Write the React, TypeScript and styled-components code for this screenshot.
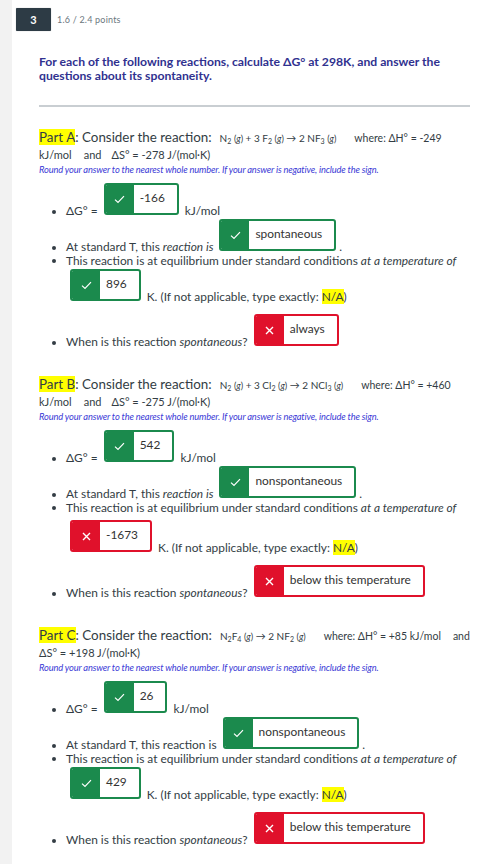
import React from "react";
import styled, { createGlobalStyle } from "styled-components";

const GlobalStyle = createGlobalStyle`
  html, body {
    margin: 0;
    padding: 0;
    background: #ffffff;
  }
  body {
    font-family: Lato, "Open Sans", "DejaVu Sans", sans-serif;
    color: #333d44;
  }
`;

const Page = styled.div`
  min-height: 864px;
  border-left: 12px solid #f2f2f2;
  box-sizing: border-box;
  padding-bottom: 20px;
`;

const Header = styled.div`
  display: flex;
  align-items: center;
  gap: 6px;
  padding: 8px 0 0 4px;
`;

const Badge = styled.div`
  width: 35px;
  height: 23px;
  display: flex;
  align-items: center;
  justify-content: center;
  background: #2d3b45;
  color: #ffffff;
  font-size: 11px;
  font-weight: 700;
  border-radius: 1px;
  box-shadow: 0 0 1px rgba(0, 0, 0, 0.4);
`;

const Points = styled.span`
  font-size: 9px;
  color: #6b7780;
  letter-spacing: 0.2px;
`;

const Content = styled.div`
  padding: 0 14px 0 27px;
`;

const Intro = styled.p`
  margin: 24px 0 0;
  color: #30318f;
  font-size: 12.2px;
  font-weight: 700;
  line-height: 14px;
`;

const Rule = styled.hr`
  margin: 22px 0 0;
  border: none;
  border-top: 2px solid #c9ced2;
`;

const Part = styled.section<{ $first?: boolean }>`
  margin-top: ${({ $first }) => ($first ? "22px" : "27px")};
`;

const TitleLine = styled.div`
  font-size: 11px;
  line-height: 16px;
  white-space: nowrap;

  sub {
    font-size: 70%;
    line-height: 0;
    vertical-align: -0.3em;
  }
`;

const Lead = styled.span`
  font-size: 13.4px;
`;

const Label = styled.span`
  background: #ffff00;
`;

const Equation = styled.span`
  font-size: 10px;
`;

const Tail = styled.span`
  font-size: 10.5px;
`;

const Gas = styled.span`
  font-size: 9px;
`;

const Gap = styled.span<{ $w: number }>`
  display: inline-block;
  width: ${({ $w }) => $w}px;
`;

const Note = styled.div`
  font-size: 9.3px;
  font-style: italic;
  color: #3a3ad6;
  line-height: 13px;
  letter-spacing: -0.15px;
`;

const List = styled.ul`
  margin: 6px 0 0;
  padding-left: 27px;
  list-style: none;
  font-size: 11.9px;
  line-height: 14px;
`;

const Item = styled.li<{ $space?: number }>`
  position: relative;
  margin-top: ${({ $space }) => $space ?? 0}px;

  &::before {
    content: "";
    position: absolute;
    left: -14px;
    bottom: 4px;
    width: 4px;
    height: 4px;
    border-radius: 50%;
    background: #333d44;
  }
`;

const EquilibriumItem = styled(Item)`
  &::before {
    bottom: auto;
    top: 5px;
  }
`;

const AnswerBox = styled.span<{ $correct: boolean; $offset?: number; $lead?: boolean }>`
  display: inline-block;
  overflow: hidden;
  vertical-align: -2px;
  box-sizing: border-box;
  height: 32px;
  margin: ${({ $offset }) => 1 + ($offset ?? 0)}px 3px 2px ${({ $lead }) => ($lead ? 4 : 3)}px;
  border-radius: 3px;
  background: #ffffff;
  border: 2px solid ${({ $correct }) => ($correct ? "#1b8a4d" : "#e0112b")};
`;

const BoxInner = styled.span`
  display: flex;
  height: 100%;
`;

const Mark = styled.span<{ $correct: boolean }>`
  width: 28px;
  display: flex;
  align-items: center;
  justify-content: center;
  background: ${({ $correct }) => ($correct ? "#1b8a4d" : "#e0112b")};
`;

const Value = styled.span`
  display: flex;
  align-items: center;
  padding: 0 12px 3px 6px;
  font-size: 11.9px;
  color: #333333;
  white-space: nowrap;
`;

const Highlight = styled.span`
  background: #ffff00;
`;

const CheckIcon = () => (
  <svg width="11" height="9" viewBox="0 0 11 9">
    <polyline points="1,4.6 4,7.4 10,1.2" fill="none" stroke="#ffffff" strokeWidth="1.2" />
  </svg>
);

const CrossIcon = () => (
  <svg width="9" height="9" viewBox="0 0 9 9">
    <path d="M1 1 L8 8 M8 1 L1 8" stroke="#ffffff" strokeWidth="1.4" />
  </svg>
);

type AnswerProps = { value: string; correct: boolean; offset?: number; lead?: boolean };

const Answer = ({ value, correct, offset, lead }: AnswerProps) => (
  <AnswerBox $correct={correct} $offset={offset} $lead={lead}>
    <BoxInner>
      <Mark $correct={correct}>{correct ? <CheckIcon /> : <CrossIcon />}</Mark>
      <Value>{value}</Value>
    </BoxInner>
  </AnswerBox>
);

const G = () => (
  <>
    {" "}
    <Gas>
      (<i>g</i>)
    </Gas>
  </>
);

type PartData = {
  label: string;
  equation: React.ReactNode;
  tail: React.ReactNode;
  second: React.ReactNode;
  dG: AnswerProps;
  spont: AnswerProps;
  italicIs: boolean;
  temp: AnswerProps;
  when: AnswerProps;
};

const parts: PartData[] = [
  {
    label: "Part A",
    equation: (
      <>
        N<sub>2</sub>
        <G /> + 3 F<sub>2</sub>
        <G /> → 2 NF<sub>3</sub>
        <G />
      </>
    ),
    tail: <>where: ΔH° = -249</>,
    second: (
      <>
        kJ/mol<Gap $w={12} />and<Gap $w={10} />ΔS° = -278 J/(mol·K)
      </>
    ),
    dG: { value: "-166", correct: true },
    spont: { value: "spontaneous", correct: true },
    italicIs: true,
    temp: { value: "896", correct: true },
    when: { value: "always", correct: false },
  },
  {
    label: "Part B",
    equation: (
      <>
        N<sub>2</sub>
        <G /> + 3 Cl<sub>2</sub>
        <G /> → 2 NCl<sub>3</sub>
        <G />
      </>
    ),
    tail: <>where: ΔH° = +460</>,
    second: (
      <>
        kJ/mol<Gap $w={12} />and<Gap $w={10} />ΔS° = -275 J/(mol·K)
      </>
    ),
    dG: { value: "542", correct: true },
    spont: { value: "nonspontaneous", correct: true },
    italicIs: true,
    temp: { value: "-1673", correct: false, offset: 4 },
    when: { value: "below this temperature", correct: false },
  },
  {
    label: "Part C",
    equation: (
      <>
        N<sub>2</sub>F<sub>4</sub>
        <G /> → 2 NF<sub>2</sub>
        <G />
      </>
    ),
    tail: (
      <>
        where: ΔH° = +85 kJ/mol<Gap $w={12} />and
      </>
    ),
    second: <>ΔS° = +198 J/(mol·K)</>,
    dG: { value: "26", correct: true },
    spont: { value: "nonspontaneous", correct: true },
    italicIs: false,
    temp: { value: "429", correct: true },
    when: { value: "below this temperature", correct: false },
  },
];

const PartBlock = ({ data, first }: { data: PartData; first?: boolean }) => (
  <Part $first={first}>
    <TitleLine>
      <Lead>
        <Label>{data.label}</Label>: Consider the reaction:
      </Lead>
      <Gap $w={8} />
      <Equation>{data.equation}</Equation>
      <Gap $w={18} />
      <Tail>{data.tail}</Tail>
    </TitleLine>
    <TitleLine>{data.second}</TitleLine>
    <Note>Round your answer to the nearest whole number. If your answer is negative, include the sign.</Note>
    <List>
      <Item>
        ΔG° = <Answer {...data.dG} /> kJ/mol
      </Item>
      <Item>
        At standard T, this {data.italicIs ? <i>reaction is</i> : "reaction is"} <Answer {...data.spont} />.
      </Item>
      <EquilibriumItem>
        This reaction is at equilibrium under standard conditions <i>at a temperature of</i>
        <br />
        <Answer {...data.temp} lead /> K. (If not applicable, type exactly: <Highlight>N/A</Highlight>)
      </EquilibriumItem>
      <Item $space={9}>
        When is this reaction <i>spontaneous</i>? <Answer {...data.when} />
      </Item>
    </List>
  </Part>
);

export default function App() {
  return (
    <>
      <GlobalStyle />
      <Page>
        <Header>
          <Badge>3</Badge>
          <Points>1.6 / 2.4 points</Points>
        </Header>
        <Content>
          <Intro>
            For each of the following reactions, calculate ΔG° at 298K, and answer the
            <br />
            questions about its spontaneity.
          </Intro>
          <Rule />
          {parts.map((p, i) => (
            <PartBlock key={p.label} data={p} first={i === 0} />
          ))}
        </Content>
      </Page>
    </>
  );
}
